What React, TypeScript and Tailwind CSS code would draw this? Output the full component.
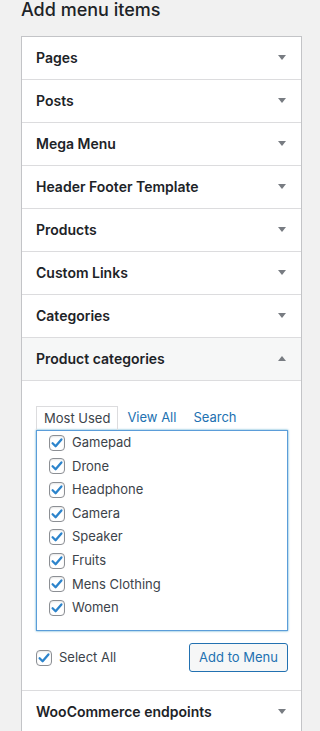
import { useState } from "react";

const sections = [
  "Pages",
  "Posts",
  "Mega Menu",
  "Header Footer Template",
  "Products",
  "Custom Links",
  "Categories",
];

const categories = [
  "Gamepad",
  "Drone",
  "Headphone",
  "Camera",
  "Speaker",
  "Fruits",
  "Mens Clothing",
  "Women",
];

const Arrow = ({ up }: { up?: boolean }) => (
  <svg width="8" height="5" viewBox="0 0 8 5" className="shrink-0">
    <path d={up ? "M0 5 L4 0 L8 5 Z" : "M0 0 L8 0 L4 5 Z"} fill="#787c82" />
  </svg>
);

const Checkbox = ({ checked, onClick }: { checked: boolean; onClick: () => void }) => (
  <span
    onClick={onClick}
    className="w-4 h-4 shrink-0 rounded-[4px] border border-[#8c8f94] bg-white flex items-center justify-center shadow-[inset_0_1px_2px_rgba(0,0,0,0.1)]"
  >
    {checked && (
      <svg width="14" height="14" viewBox="0 0 14 14">
        <path
          d="M2.6 7.2 L5.6 10.2 L11.4 3.4"
          fill="none"
          stroke="#2c84cc"
          strokeWidth={2.3}
          strokeLinecap="round"
          strokeLinejoin="round"
        />
      </svg>
    )}
  </span>
);

const SectionRow = ({ title }: { title: string }) => (
  <div className="h-[43px] border-b border-[#dcdcde] flex items-center justify-between pl-[14px] pr-[15px] pb-[1px]">
    <span className="text-[14px] font-semibold text-[#1d2327]">{title}</span>
    <Arrow />
  </div>
);

export default function App() {
  const [checked, setChecked] = useState<Record<string, boolean>>(
    Object.fromEntries(categories.map((c) => [c, true]))
  );
  const allChecked = categories.every((c) => checked[c]);

  return (
    <div className="min-h-screen bg-[#f1f1f1] font-['Inter',_'Liberation_Sans',_sans-serif] overflow-hidden">
      <h2 className="pl-[21px] h-[36px] text-[18px] leading-[20px] font-medium text-[#1d2327]">
        Add menu items
      </h2>

      <div className="ml-[21px] w-[281px] border border-b-0 border-[#c3c4c7] bg-white">
        {sections.map((s) => (
          <SectionRow key={s} title={s} />
        ))}

        <div className="h-[43px] border-b border-[#dcdcde] bg-[#f6f7f7] flex items-center justify-between pl-[14px] pr-[15px] pb-[1px]">
          <span className="text-[14px] font-semibold text-[#1d2327]">Product categories</span>
          <Arrow up />
        </div>

        <div className="border-b border-[#dcdcde] pt-[25px] pl-[14px] pr-[13px] pb-[18px]">
          <div className="flex items-end h-[24px] text-[13px]">
            <span className="h-[24px] px-[7px] flex items-center border border-b-0 border-[#dcdcde] text-[#3c434a]">
              Most Used
            </span>
            <span className="ml-[9px] h-[24px] flex items-center text-[#2271b1]">View All</span>
            <span className="ml-[17px] h-[24px] flex items-center text-[#2271b1]">Search</span>
          </div>

          <div className="h-[201px] border border-[#5b9dd9] shadow-[0_0_2px_rgba(30,140,190,0.8)] pl-[12px] overflow-hidden">
            {categories.map((c) => (
              <label key={c} className="h-[23.6px] flex items-center gap-[7px] text-[13px] text-[#3c434a]">
                <Checkbox
                  checked={!!checked[c]}
                  onClick={() => setChecked((p) => ({ ...p, [c]: !p[c] }))}
                />
                {c}
              </label>
            ))}
          </div>

          <div className="mt-[12px] flex items-center justify-between">
            <label className="flex items-center gap-[7px] text-[13px] text-[#3c434a]">
              <Checkbox
                checked={allChecked}
                onClick={() =>
                  setChecked(Object.fromEntries(categories.map((c) => [c, !allChecked])))
                }
              />
              Select All
            </label>
            <button className="w-[99px] h-[29px] rounded-[3px] border border-[#2271b1] bg-[#f6f7f7] text-[13px] text-[#2271b1]">
              Add to Menu
            </button>
          </div>
        </div>

        <SectionRow title="WooCommerce endpoints" />
      </div>
    </div>
  );
}
